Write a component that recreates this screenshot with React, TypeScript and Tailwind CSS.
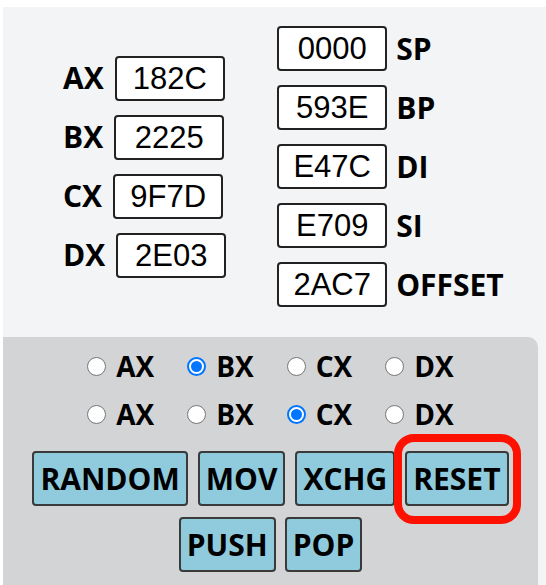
import React, { useState } from "react";

const LEFT_REGS = [
  { name: "AX", value: "182C" },
  { name: "BX", value: "2225" },
  { name: "CX", value: "9F7D" },
  { name: "DX", value: "2E03" },
];

const RIGHT_REGS = [
  { name: "SP", value: "0000" },
  { name: "BP", value: "593E" },
  { name: "DI", value: "E47C" },
  { name: "SI", value: "E709" },
  { name: "OFFSET", value: "2AC7" },
];

const GENERAL = ["AX", "BX", "CX", "DX"];

const labelFont = { fontFamily: '"Open Sans", "Noto Sans", sans-serif' };
const valueFont = { fontFamily: '"Liberation Sans", Arial, sans-serif' };

const RegBox = ({ value }: { value: string }) => (
  <div
    className="w-[110px] h-[45px] flex items-center justify-center bg-white border-2 border-[#222] rounded-[4px] text-[31px] text-black leading-none"
    style={valueFont}
  >
    {value}
  </div>
);

const Radio = ({ checked, onClick }: { checked: boolean; onClick: () => void }) => (
  <span
    role="radio"
    aria-checked={checked}
    onClick={onClick}
    className={
      checked
        ? "w-[19px] h-[19px] rounded-full border-[2px] border-[#0075ff] bg-white flex items-center justify-center cursor-pointer"
        : "w-[19px] h-[19px] rounded-full border border-[#767676] bg-white cursor-pointer"
    }
  >
    {checked && <span className="w-[11px] h-[11px] rounded-full bg-[#0075ff]" />}
  </span>
);

const RadioRow = ({ selected, onSelect }: { selected: string; onSelect: (r: string) => void }) => (
  <div className="h-[48px] flex items-center justify-center gap-[33px]">
    {GENERAL.map((r) => (
      <label key={r} className="flex items-center gap-[10px] cursor-pointer">
        <Radio checked={selected === r} onClick={() => onSelect(r)} />
        <span className="text-[28px] font-bold text-black leading-none" style={labelFont}>
          {r}
        </span>
      </label>
    ))}
  </div>
);

const Btn = ({ children }: { children: React.ReactNode }) => (
  <button
    className="h-[55px] px-[6px] bg-[#8fcbdc] border-2 border-[#3a3a3a] rounded-[4px] text-[30px] font-bold text-black leading-none"
    style={labelFont}
  >
    {children}
  </button>
);

export default function App() {
  const [src, setSrc] = useState("BX");
  const [dst, setDst] = useState("CX");

  return (
    <div className="w-[546px] h-[585px] overflow-hidden bg-white pt-[7px] pl-[3px]">
      <div className="h-full bg-[#f2f4f5] flex flex-col">
        {/* registers */}
        <div className="flex items-center gap-[51px] pl-[60px] pt-[19px] pb-[30px]">
          <div className="flex flex-col gap-[14px]">
            {LEFT_REGS.map((r) => (
              <div key={r.name} className="flex items-center gap-[11px]">
                <span className="text-[30px] font-bold text-black leading-none" style={labelFont}>
                  {r.name}
                </span>
                <RegBox value={r.value} />
              </div>
            ))}
          </div>
          <div className="flex flex-col gap-[14px]">
            {RIGHT_REGS.map((r) => (
              <div key={r.name} className="flex items-center gap-[9px]">
                <RegBox value={r.value} />
                <span className="text-[30px] font-bold text-black leading-none" style={labelFont}>
                  {r.name}
                </span>
              </div>
            ))}
          </div>
        </div>

        {/* controls */}
        <div className="flex-1 w-[535px] bg-[#d3d4d5] rounded-tr-[10px] pt-[5px]">
          <RadioRow selected={src} onSelect={setSrc} />
          <RadioRow selected={dst} onSelect={setDst} />
          <div className="mt-[13px] flex justify-center gap-[10px]">
            <Btn>RANDOM</Btn>
            <Btn>MOV</Btn>
            <Btn>XCHG</Btn>
            <div className="relative">
              <Btn>RESET</Btn>
              <span className="absolute -left-[11px] -top-[17px] w-[127px] h-[90px] border-[8px] border-[#fe1100] rounded-[20px] pointer-events-none" />
            </div>
          </div>
          <div className="mt-[11px] flex justify-center gap-[9px]">
            <Btn>PUSH</Btn>
            <Btn>POP</Btn>
          </div>
        </div>
      </div>
    </div>
  );
}
